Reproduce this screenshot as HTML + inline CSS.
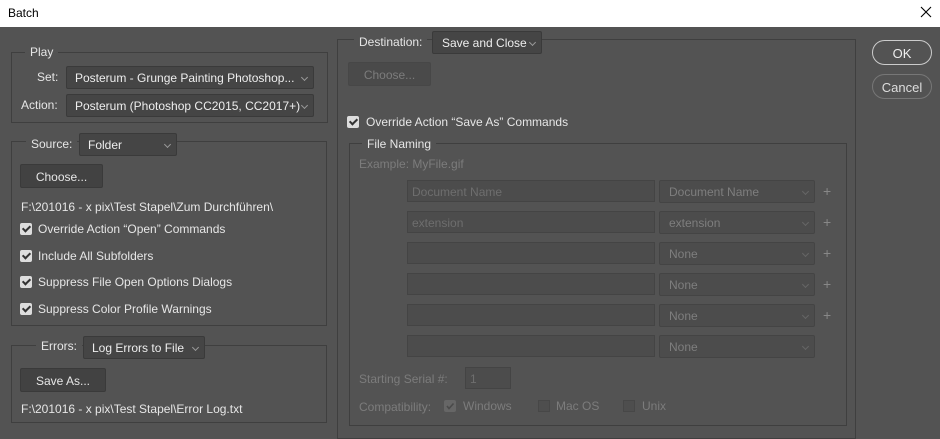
<!DOCTYPE html>
<html><head><meta charset="utf-8"><style>
*{box-sizing:border-box;margin:0;padding:0}
html,body{width:940px;height:430px}
body{background:#535353;font-family:"Liberation Sans",sans-serif;font-size:12px;color:#e6e6e6;position:relative;overflow:hidden}
.a{position:absolute;white-space:nowrap}
.title{left:0;top:0;width:940px;height:27px;background:#fff;color:#000;font-size:12px;padding:6px 0 0 8px}
.fs{position:absolute;border:1px solid #3f3f3f}
.lg{position:absolute;background:#535353;padding:0 5px}
.sel{position:absolute;background:#454545;border:1px solid #3a3a3a;border-radius:2px;padding:4px 0 0 8px;height:23px;color:#eee;font-size:12px}
.sel:after{content:"";position:absolute;right:6px;top:8px;width:4px;height:4px;border-right:1px solid #999;border-bottom:1px solid #999;transform:rotate(45deg)}
.btn{position:absolute;background:#424242;border:1px solid #3a3a3a;border-radius:2px;text-align:center;padding-top:5px;height:24px}
.cb{position:absolute;width:12px;height:12px;background:#ddd;border-radius:2px}
.cb:after{content:"";position:absolute;left:4px;top:1px;width:3px;height:6px;border-right:2px solid #333;border-bottom:2px solid #333;transform:rotate(45deg)}
.dis{color:#7c7c7c}
.ti{position:absolute;background:#4c4c4c;border:1px solid #444;height:22px;left:407px;width:248px;padding:4px 0 0 4px;color:#6e6e6e}
.ds{position:absolute;background:#4c4c4c;border:1px solid #444;border-radius:2px;height:23px;left:659px;width:156px;padding:4px 0 0 9px;color:#7e7e7e}
.ds:after{content:"";position:absolute;right:6px;top:8px;width:4px;height:4px;border-right:1px solid #666;border-bottom:1px solid #666;transform:rotate(45deg)}
.pl{position:absolute;left:823px;color:#888;font-size:14px}
.pill{position:absolute;left:872px;width:60px;height:25px;border-radius:13px;text-align:center;padding-top:5px;font-size:13px}
</style></head><body>
<div class="a title">Batch</div>
<svg class="a" style="left:920px;top:6px" width="12" height="12" viewBox="0 0 12 12"><path d="M1 1L11 11M11 1L1 11" stroke="#000" stroke-width="1.1"/></svg>

<div class="fs" style="left:11px;top:52px;width:317px;height:71px"></div>
<div class="lg" style="left:25px;top:45px">Play</div>
<div class="a" style="left:37px;top:70px">Set:</div>
<div class="sel" style="left:66px;top:66px;width:248px">Posterum - Grunge Painting Photoshop...</div>
<div class="a" style="left:21px;top:98px">Action:</div>
<div class="sel" style="left:66px;top:94px;width:248px">Posterum (Photoshop CC2015, CC2017+)</div>

<div class="fs" style="left:11px;top:141px;width:316px;height:185px"></div>
<div class="lg" style="left:26px;top:137px">Source:</div>
<div class="sel" style="left:79px;top:133px;width:98px">Folder</div>
<div class="btn" style="left:20px;top:164px;width:83px">Choose...</div>
<div class="a" style="left:21px;top:200px">F:\201016 - x pix\Test Stapel\Zum Durchführen\</div>
<div class="cb" style="left:20px;top:223px"></div><div class="a" style="left:38px;top:222px">Override Action “Open” Commands</div>
<div class="cb" style="left:20px;top:250px"></div><div class="a" style="left:38px;top:249px">Include All Subfolders</div>
<div class="cb" style="left:20px;top:276px"></div><div class="a" style="left:38px;top:275px">Suppress File Open Options Dialogs</div>
<div class="cb" style="left:20px;top:303px"></div><div class="a" style="left:38px;top:302px">Suppress Color Profile Warnings</div>

<div class="fs" style="left:11px;top:345px;width:316px;height:78px"></div>
<div class="lg" style="left:36px;top:339px">Errors:</div>
<div class="sel" style="left:83px;top:336px;width:122px">Log Errors to File</div>
<div class="btn" style="left:20px;top:368px;width:86px">Save As...</div>
<div class="a" style="left:21px;top:402px">F:\201016 - x pix\Test Stapel\Error Log.txt</div>

<div class="fs" style="left:337px;top:39px;width:519px;height:400px"></div>
<div class="lg" style="left:354px;top:35px">Destination:</div>
<div class="sel" style="left:432px;top:31px;width:110px;padding-left:9px">Save and Close</div>
<div class="btn dis" style="left:348px;top:62px;width:83px;background:#4a4a4a;border-color:#474747">Choose...</div>
<div class="cb" style="left:347px;top:116px"></div><div class="a" style="left:366px;top:115px">Override Action “Save As” Commands</div>

<div class="fs" style="left:349px;top:143px;width:498px;height:283px"></div>
<div class="lg" style="left:362px;top:137px">File Naming</div>
<div class="a dis" style="left:359px;top:157px">Example: MyFile.gif</div>
<div class="ti" style="top:180px">Document Name</div><div class="ds" style="top:180px">Document Name</div><div class="pl" style="top:183px">+</div>
<div class="ti" style="top:211px">extension</div><div class="ds" style="top:211px">extension</div><div class="pl" style="top:214px">+</div>
<div class="ti" style="top:242px"></div><div class="ds" style="top:242px">None</div><div class="pl" style="top:245px">+</div>
<div class="ti" style="top:273px"></div><div class="ds" style="top:273px">None</div><div class="pl" style="top:276px">+</div>
<div class="ti" style="top:304px"></div><div class="ds" style="top:304px">None</div><div class="pl" style="top:307px">+</div>
<div class="ti" style="top:335px"></div><div class="ds" style="top:335px">None</div>
<div class="a dis" style="left:359px;top:372px">Starting Serial #:</div>
<div class="ti" style="top:367px;left:465px;width:46px">1</div>
<div class="a dis" style="left:359px;top:400px">Compatibility:</div>
<div class="a" style="left:444px;top:400px;width:12px;height:12px;background:#666;border-radius:2px"><svg width="12" height="12" style="position:absolute;left:0;top:0"><path d="M3 6L5 8.5L9.5 3.5" stroke="#4a4a4a" stroke-width="1.6" fill="none"/></svg></div>
<div class="a dis" style="left:463px;top:399px">Windows</div>
<div class="a" style="left:538px;top:400px;width:12px;height:12px;border:1px solid #474747;background:#4e4e4e"></div>
<div class="a dis" style="left:556px;top:399px">Mac OS</div>
<div class="a" style="left:623px;top:400px;width:12px;height:12px;border:1px solid #474747;background:#4e4e4e"></div>
<div class="a dis" style="left:642px;top:399px">Unix</div>

<div class="pill" style="top:40px;border:1px solid #ccc;color:#eee">OK</div>
<div class="pill" style="top:74px;border:1px solid #777;color:#ddd">Cancel</div>
</body></html>
